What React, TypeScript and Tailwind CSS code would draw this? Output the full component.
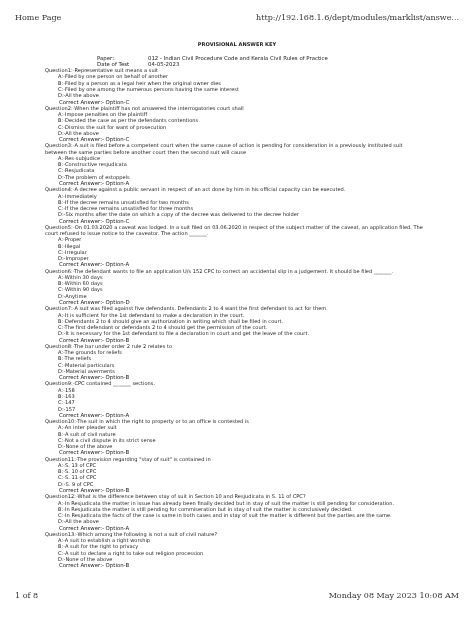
const questions = [
  { q: "Question1:-Representative suit means a suit", o: ["A:-Filed by one person on behalf of another", "B:-Filed by a person as a legal heir when the original owner dies", "C:-Filed by one among the numerous persons having the same interest", "D:-All the above"], a: "C" },
  { q: "Question2:-When the plaintiff has not answered the interrogatories court shall", o: ["A:-Impose penalties on the plaintiff", "B:-Decided the case as per the defendants contentions", "C:-Dismiss the suit for want of prosecution", "D:-All the above"], a: "C" },
  { q: "Question3:-A suit is filed before a competent court when the same cause of action is pending for consideration in a previously instituted suit between the same parties before another court then the second suit will cause", o: ["A:-Res-subjudice", "B:-Constructive resjudicata", "C:-Resjudicata", "D:-The problem of estoppels"], a: "A" },
  { q: "Question4:-A decree against a public servant in respect of an act done by him in his official capacity can be executed.", o: ["A:-Immediately", "B:-If the decree remains unsatisfied for two months", "C:-If the decree remains unsatisfied for three months", "D:-Six months after the date on which a copy of the decree was delivered to the decree holder"], a: "C" },
  { q: "Question5:-On 01.03.2020 a caveat was lodged. In a suit filed on 03.06.2020 in respect of the subject matter of the caveat, an application filed. The court refused to issue notice to the caveator. The action _______.", o: ["A:-Proper", "B:-Illegal", "C:-Irregular", "D:-Improper"], a: "A" },
  { q: "Question6:-The defendant wants to file an application U/s 152 CPC to correct an accidental slip in a judgement. It should be filed _______.", o: ["A:-Within 30 days", "B:-Within 60 days", "C:-Within 90 days", "D:-Anytime"], a: "D" },
  { q: "Question7:-A suit was filed against five defendants. Defendants 2 to 4 want the first defendant to act for them.", o: ["A:-It is sufficient for the 1st defendant to make a declaration in the court.", "B:-Defendants 2 to 4 should give an authorization in writing which shall be filed in court.", "C:-The first defendant or defendants 2 to 4 should get the permission of the court.", "D:-It is necessary for the 1st defendant to file a declaration in court and get the leave of the court."], a: "B" },
  { q: "Question8:-The bar under order 2 rule 2 relates to", o: ["A:-The grounds for reliefs", "B:-The reliefs", "C:-Material particulars", "D:-Material averments"], a: "B" },
  { q: "Question9:-CPC contained _______ sections.", o: ["A:-158", "B:-163", "C:-147", "D:-157"], a: "A" },
  { q: "Question10:-The suit in which the right to property or to an office is contested is", o: ["A:-An inter pleader suit", "B:-A suit of civil nature", "C:-Not a civil dispute in its strict sense", "D:-None of the above"], a: "B" },
  { q: "Question11:-The provision regarding \"stay of suit\" is contained in", o: ["A:-S. 13 of CPC", "B:-S. 10 of CPC", "C:-S. 11 of CPC", "D:-S. 9 of CPC"], a: "B" },
  { q: "Question12:-What is the difference between stay of suit in Section 10 and Resjudicata in S. 11 of CPC?", o: ["A:-In Resjudicata the matter in issue has already been finally decided but in stay of suit the matter is still pending for consideration.", "B:-In Resjudicata the matter is still pending for commiseration but in stay of suit the matter is conclusively decided.", "C:-In Resjudicata the facts of the case is same in both cases and in stay of suit the matter is different but the parties are the same.", "D:-All the above"], a: "A" },
  { q: "Question13:-Which among the following is not a suit of civil nature?", o: ["A:-A suit to establish a right worship", "B:-A suit for the right to privacy", "C:-A suit to declare a right to take out religion procession", "D:-None of the above"], a: "B" },
];

export default function App() {
  return (
    <div className="h-[632px] w-[474px] overflow-hidden bg-white text-[#222] font-['DejaVu_Sans',sans-serif] blur-[0.35px]">
      <header className="flex justify-between px-[15px] pt-[12px] font-['DejaVu_Serif',serif] text-[8px] leading-[11px] text-[#333]">
        <span>Home Page</span>
        <span>http://192.168.1.6/dept/modules/marklist/answe...</span>
      </header>
      <main className="pt-[18px] pl-[45px] w-[425px] text-[5.08px] leading-[6.27px]">
        <h1 className="text-center font-bold pl-[4px] mb-[7.4px]">PROVISIONAL ANSWER KEY</h1>
        <div className="pl-[52px] text-[5.4px]">
          <div className="flex"><span className="w-[51px]">Paper:</span><span>012 - Indian Civil Procedure Code and Kerala Civil Rules of Practice</span></div>
          <div className="flex"><span className="w-[51px]">Date of Test</span><span>04-05-2023</span></div>
        </div>
        {questions.map((item) => (
          <section key={item.q}>
            <p>{item.q}</p>
            <ul className="pl-[13px]">
              {item.o.map((opt) => <li key={opt}>{opt}</li>)}
            </ul>
            <p className="pl-[14px] text-[5.4px]">Correct Answer:- Option-{item.a}</p>
          </section>
        ))}
      </main>
      <footer className="flex justify-between px-[15px] pt-[22px] font-['DejaVu_Serif',serif] text-[8px] leading-[11px] text-[#333]">
        <span>1 of 8</span>
        <span>Monday 08 May 2023 10:08 AM</span>
      </footer>
    </div>
  );
}
